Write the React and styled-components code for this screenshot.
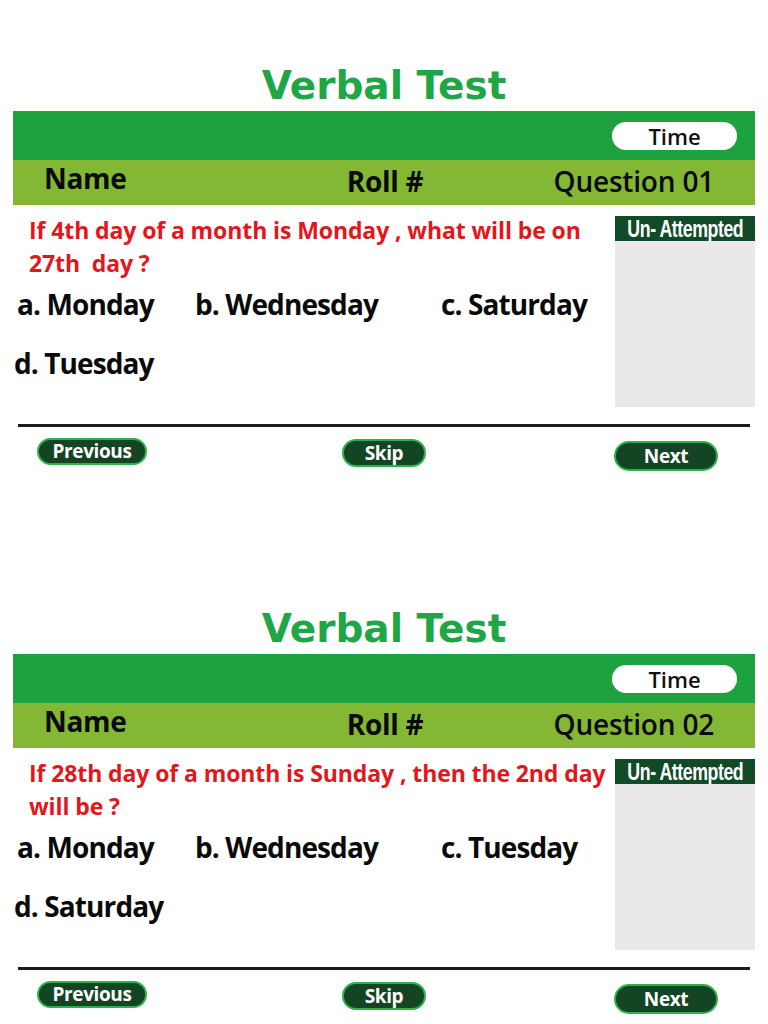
import styled, { createGlobalStyle } from "styled-components";

const GlobalStyle = createGlobalStyle`
  * { box-sizing: border-box; }
  body {
    margin: 0;
    background: #fff;
    font-family: "Open Sans", "Liberation Sans", sans-serif;
  }
`;

const questions = [
  {
    num: "01",
    text: "If 4th day of a month is Monday , what will be on 27th\u00a0 day ?",
    options: ["a. Monday", "b. Wednesday", "c. Saturday", "d. Tuesday"],
  },
  {
    num: "02",
    text: "If 28th day of a month is Sunday , then the 2nd day will be ?",
    options: ["a. Monday", "b. Wednesday", "c. Tuesday", "d. Saturday"],
  },
];

const App = () => {
  return (
    <>
      <GlobalStyle />
      <Page>
        {questions.map((q) => (
          <Panel key={q.num}>
            <Title>Verbal Test</Title>
            <TopBar>
              <TimePill>Time</TimePill>
            </TopBar>
            <InfoBar>
              <InfoLeft>Name</InfoLeft>
              <InfoCenter>Roll #</InfoCenter>
              <InfoRight>Question {q.num}</InfoRight>
            </InfoBar>
            <Body>
              <Main>
                <Question>{q.text}</Question>
                <Options>
                  {q.options.map((o) => (
                    <Option key={o}>{o}</Option>
                  ))}
                </Options>
              </Main>
              <Side>
                <SideHead>
                  <Narrow>Un- Attempted</Narrow>
                </SideHead>
              </Side>
            </Body>
            <Rule />
            <Footer>
              <NavButton $w={110} $h={27} $top={1}>Previous</NavButton>
              <NavButton $w={84} $h={28} $top={2} $center>Skip</NavButton>
              <NavButton $w={104} $h={30} $top={4} $right>Next</NavButton>
            </Footer>
          </Panel>
        ))}
      </Page>
    </>
  );
};

const Page = styled.div`
  padding-top: 61px;
  display: flex;
  flex-direction: column;
  gap: 133px;
`;

const Panel = styled.section`
  display: flex;
  flex-direction: column;
`;

const Title = styled.h1`
  margin: 0;
  height: 50px;
  line-height: 50px;
  text-align: center;
  font-family: "DejaVu Sans", "Liberation Sans", sans-serif;
  font-weight: 700;
  font-size: 39px;
  color: #20a646;
`;

const TopBar = styled.div`
  margin: 0 13px;
  height: 49px;
  background: #1ea23f;
  display: flex;
  justify-content: flex-end;
  align-items: flex-start;
  padding: 11px 18px 0 0;
`;

const TimePill = styled.div`
  width: 125px;
  height: 28px;
  border-radius: 14px;
  background: #fff;
  color: #111;
  font-size: 22px;
  font-weight: 600;
  line-height: 28px;
  text-align: center;
`;

const InfoBar = styled.div`
  margin: 0 13px;
  height: 45px;
  background: #84b834;
  display: grid;
  grid-template-columns: 1fr auto 1fr;
  align-items: center;
  padding: 0 41px 4px 31px;
  color: #0a0a0a;
  font-size: 28px;
`;

const InfoLeft = styled.div`
  font-weight: 700;
  letter-spacing: -0.3px;
  margin-top: -5px;
`;

const InfoCenter = styled.div`
  font-weight: 700;
  letter-spacing: -0.3px;
  margin-left: 12px;
`;

const InfoRight = styled.div`
  justify-self: end;
  font-weight: 600;
  font-size: 28px;
  letter-spacing: -0.2px;
`;

const Body = styled.div`
  display: flex;
  align-items: flex-start;
  margin: 0 13px;
`;

const Main = styled.div`
  flex: 1;
  padding-top: 9px;
`;

const Question = styled.p`
  margin: 0;
  padding-left: 16px;
  color: #e3161c;
  font-size: 23px;
  font-weight: 700;
  line-height: 33px;
  letter-spacing: -0.1px;
`;

const Options = styled.div`
  display: grid;
  grid-template-columns: 178px 246px auto;
  row-gap: 19px;
  margin-top: 4px;
  padding-left: 4px;
`;

const Option = styled.div`
  font-size: 28px;
  font-weight: 700;
  line-height: 40px;
  color: #0a0a0a;
  letter-spacing: -0.9px;
  &:nth-child(4) {
    margin-left: -3px;
  }
`;

const Side = styled.aside`
  width: 140px;
  height: 191px;
  margin-top: 11px;
  background: #e9e9e9;
`;

const SideHead = styled.div`
  height: 25px;
  background: #114a26;
  color: #fff;
  display: flex;
  justify-content: center;
  align-items: center;
  overflow: hidden;
  white-space: nowrap;
`;

const Narrow = styled.span`
  flex: none;
  font-family: "Liberation Sans", Arial, sans-serif;
  font-weight: 700;
  font-size: 24px;
  line-height: 25px;
  letter-spacing: -0.6px;
  transform: scaleX(0.74);
  transform-origin: center;
`;

const Rule = styled.hr`
  margin: 17px 18px 0;
  border: none;
  height: 3px;
  background: #1c1c1c;
`;

const Footer = styled.div`
  display: grid;
  grid-template-columns: 1fr 1fr 1fr;
  align-items: start;
  height: 34px;
  margin-top: 10px;
  padding: 0 50px 0 37px;
`;

const NavButton = styled.button`
  justify-self: ${(p) => (p.$right ? "end" : p.$center ? "center" : "start")};
  margin-top: ${(p) => p.$top}px;
  margin-left: ${(p) => (p.$center ? "13px" : "0")};
  width: ${(p) => p.$w}px;
  height: ${(p) => p.$h}px;
  border-radius: ${(p) => p.$h / 2}px;
  border: 2px solid #2db24b;
  background: #134424;
  color: #fff;
  font-family: "Open Sans", "Liberation Sans", sans-serif;
  font-size: 19px;
  font-weight: 700;
  line-height: 1;
  padding: 0;
  letter-spacing: -0.4px;
`;

export default App;
